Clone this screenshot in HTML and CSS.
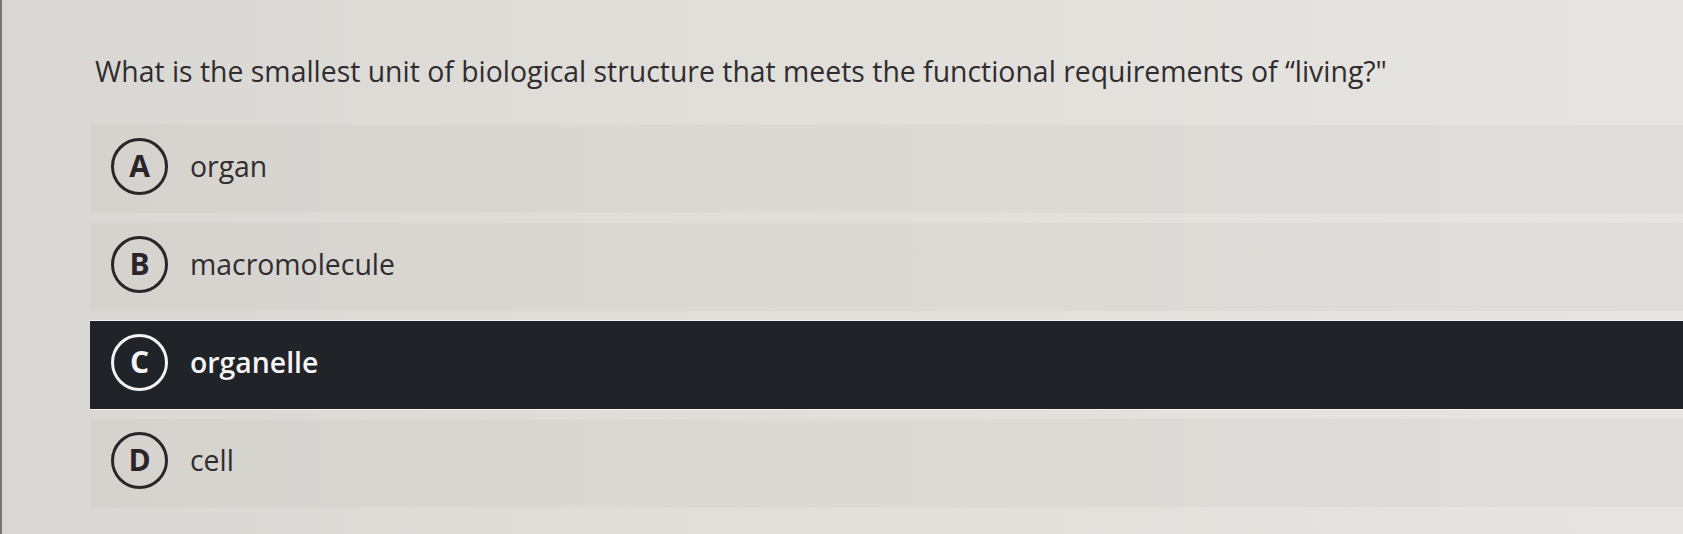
FILE: index.html
```html
<!DOCTYPE html>
<html lang="en">
<head>
<meta charset="utf-8">
<title>Question</title>
<link rel="stylesheet" href="styles.css">
</head>
<body>
<main class="page">
  <p class="question">What is the smallest unit of biological structure that meets the functional requirements of “living?"</p>
  <ul class="options">
    <li class="option"><span class="badge">A</span><span class="label">organ</span></li>
    <li class="option"><span class="badge">B</span><span class="label">macromolecule</span></li>
    <li class="option selected"><span class="badge">C</span><span class="label">organelle</span></li>
    <li class="option"><span class="badge">D</span><span class="label">cell</span></li>
  </ul>
</main>
</body>
</html>
```
FILE: styles.css
```css
html, body {
  margin: 0;
  padding: 0;
  height: 100%;
}
body {
  background: linear-gradient(90deg, #d9d7d3 0%, #dfded9 40%, #e6e5e1 100%);
  font-family: "Open Sans", "Liberation Sans", sans-serif;
  color: #312c30;
  overflow: hidden;
}
.page {
  box-sizing: border-box;
  height: 100%;
  border-left: 2px solid #77756f;
  padding-top: 52px;
}
.question {
  margin: 0 0 35px 93px;
  font-size: 28.4px;
  line-height: 38px;
  white-space: nowrap;
}
.options {
  list-style: none;
  margin: 0 0 0 88px;
  padding: 0;
  display: flex;
  flex-direction: column;
  gap: 10px;
}
.option {
  box-sizing: border-box;
  height: 88px;
  display: flex;
  align-items: center;
  gap: 22px;
  padding: 0 0 6px 21px;
  background: rgba(200, 198, 193, 0.22);
}
.badge {
  box-sizing: border-box;
  width: 57px;
  height: 57px;
  border: 3px solid #2b2529;
  border-radius: 50%;
  display: flex;
  align-items: center;
  justify-content: center;
  font-size: 30px;
  font-weight: 700;
  line-height: 1;
  color: #2b2529;
  flex: none;
}
.label {
  font-size: 28.4px;
  line-height: 38px;
}
.option.selected {
  background: #202328;
  box-shadow: 0 -1px 0 #f3f3f1, 0 1px 0 #f3f3f1;
}
.option.selected .badge {
  border-color: #f4f2f2;
  color: #f4f2f2;
}
.option.selected .label {
  color: #f6f4f4;
  font-weight: 600;
}
```
